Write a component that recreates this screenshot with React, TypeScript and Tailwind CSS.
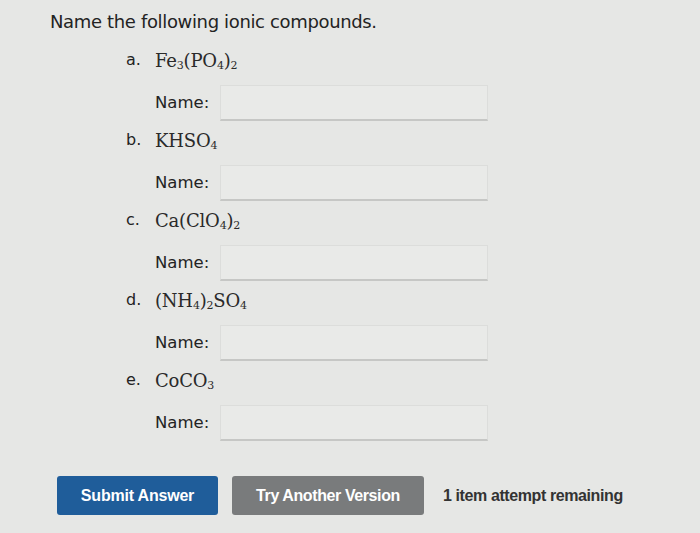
import React from 'react';

type Item = { letter: string; formula: React.ReactNode };

const Sub = ({ children }: { children: React.ReactNode }) => (
  <sub className="text-[11px] relative top-[2px] align-baseline">{children}</sub>
);

const items: Item[] = [
  { letter: 'a.', formula: <>Fe<Sub>3</Sub>(PO<Sub>4</Sub>)<Sub>2</Sub></> },
  { letter: 'b.', formula: <>KHSO<Sub>4</Sub></> },
  { letter: 'c.', formula: <>Ca(ClO<Sub>4</Sub>)<Sub>2</Sub></> },
  { letter: 'd.', formula: <>(NH<Sub>4</Sub>)<Sub>2</Sub>SO<Sub>4</Sub></> },
  { letter: 'e.', formula: <>CoCO<Sub>3</Sub></> },
];

const sans = { fontFamily: '"DejaVu Sans", Verdana, sans-serif' };
const serif = { fontFamily: '"DejaVu Serif", Georgia, serif' };
const btn = { fontFamily: '"Liberation Sans", Arial, sans-serif' };

const App: React.FC = () => {
  return (
    <div className="w-[700px] h-[533px] bg-[#e6e7e5] text-[#232323] overflow-hidden pl-[50px] pt-[10px]" style={sans}>
      <h1 className="text-[18px] leading-[24px] tracking-[-0.35px]">Name the following ionic compounds.</h1>

      <div className="mt-[14px] flex flex-col">
        {items.map((it) => (
          <div key={it.letter} className="flex flex-col h-[80px]">
            <div className="flex items-center h-[24px] pl-[76px]">
              <span className="w-[29px] text-[16px]">{it.letter}</span>
              <span className="text-[18px] text-[#2a2a2a] tracking-[-0.2px]" style={serif}>{it.formula}</span>
            </div>
            <div className="flex items-center mt-[13px] pl-[105px]">
              <span className="w-[65px] text-[16.5px]">Name:</span>
              <div className="w-[268px] h-[36px] bg-[#e9eae8] border border-[#dcdddb] border-b-[2px] border-b-[#c6c7c5]" />
            </div>
          </div>
        ))}
      </div>

      <div className="flex items-center mt-[28px] pl-[7px]" style={btn}>
        <button className="w-[161px] h-[39px] rounded-[3px] bg-[#1f5d9a] text-white font-bold text-[16px] tracking-[-0.2px]">
          Submit Answer
        </button>
        <button className="ml-[14px] w-[192px] h-[39px] rounded-[3px] bg-[#797b7c] text-white font-bold text-[16px] tracking-[-0.4px]">
          Try Another Version
        </button>
        <span className="ml-[19px] text-[16px] font-bold text-[#333] tracking-[-0.4px]">1 item attempt remaining</span>
      </div>
    </div>
  );
};

export default App;
